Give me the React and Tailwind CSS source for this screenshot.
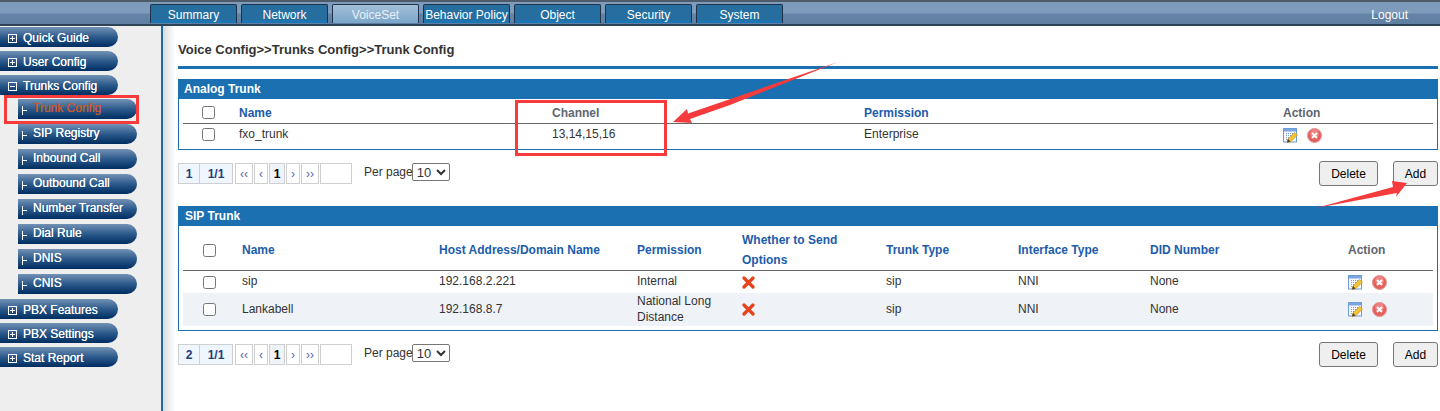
const font = { fontFamily: '"Liberation Sans", Arial, sans-serif' };

const tabs = [
  ['Summary', false],
  ['Network', false],
  ['VoiceSet', true],
  ['Behavior Policy', false],
  ['Object', false],
  ['Security', false],
  ['System', false],
];

function Box({ minus }) {
  return (
    <span className="w-[9px] h-[9px] border border-white flex items-center justify-center relative shrink-0">
      <span className="absolute w-[5px] h-px bg-white" />
      {!minus && <span className="absolute w-px h-[5px] bg-white" />}
    </span>
  );
}

const navText = '[text-shadow:0_0_0.6px_currentColor]';

function TopItem({ label, minus }) {
  return (
    <div className="h-5 w-[118px] mb-1 rounded-r-[10px] bg-linear-to-b from-[#7392b5] via-[#2c5a8c] to-[#002d60] flex items-center pl-2 gap-[6px] text-white text-[12px]">
      <span className="mt-[2px]"><Box minus={minus} /></span>
      <span className={`pt-[2px] ${navText}`}>{label}</span>
    </div>
  );
}

function SubItem({ label, active }) {
  return (
    <div className="h-5 w-[119px] ml-[18px] mb-[5px] rounded-r-[10px] bg-linear-to-b from-[#7392b5] via-[#2c5a8c] to-[#002d60] flex items-center pl-[3px] text-[12px]">
      <span className="relative w-[5px] h-[9px] border-l border-white mr-[6px] ml-[1px] mt-[2px]">
        <span className="absolute left-0 top-[4px] w-1 h-px bg-white" />
      </span>
      <span className={`pb-[3px] ${navText} ${active ? 'text-[#c8592e]' : 'text-white'}`}>{label}</span>
    </div>
  );
}

function EditIcon() {
  return (
    <svg width="15" height="15" viewBox="0 0 15 15" className="shrink-0">
      <rect x="0.5" y="0.5" width="13" height="13.5" fill="#f4f8fd" stroke="#6f9bd8" />
      <rect x="1" y="1" width="12" height="2.5" fill="#7ba5de" />
      <path d="M3 5.5h8M3 7.5h8M3 9.5h5M3 11.5h3" stroke="#7f9cc4" strokeWidth="1" strokeDasharray="1 1" />
      <path d="M4 14.5l1-3.5 6.5-6.5 3 2.5-6.5 6.5z" fill="#f2c335" stroke="#b98a1e" strokeWidth="0.6" />
      <path d="M4 14.5l1-3.5 2.5 2.5z" fill="#5a3a1a" />
    </svg>
  );
}

function DeleteIcon() {
  return (
    <svg width="15" height="15" viewBox="0 0 15 15" className="shrink-0">
      <circle cx="7.5" cy="7.5" r="7" fill="#e4605f" stroke="#e39593" />
      <circle cx="7.5" cy="5.5" r="4.5" fill="#f29a98" opacity="0.6" />
      <path d="M5 5l5 5M10 5l-5 5" stroke="#fff" strokeWidth="2" />
    </svg>
  );
}

function RedX() {
  return (
    <svg width="13" height="13" viewBox="0 0 13 13">
      <path d="M2 2l9 9M11 2l-9 9" stroke="#e5431c" strokeWidth="3.2" strokeLinecap="round" />
    </svg>
  );
}

function Pager({ count }) {
  const cell = 'h-[21px] border border-[#cfcfcf] flex items-center justify-center text-[12px]';
  return (
    <div className="flex items-start">
      <div className={`${cell} w-[22px] bg-[#f0f6fd] font-bold text-[#1b3f80]`}>{count}</div>
      <div className={`${cell} w-[34px] -ml-px bg-[#f0f6fd] font-bold text-[#1b3f80] mr-[2px]`}>1/1</div>
      <div className={`${cell} w-[18px] text-[#5a5fb0] mr-px`}>‹‹</div>
      <div className={`${cell} w-[14px] text-[#5a5fb0] mr-px`}>‹</div>
      <div className={`${cell} w-4 bg-[#f0f4fa] font-bold text-black mr-px`}>1</div>
      <div className={`${cell} w-[14px] text-[#5a5fb0] mr-px`}>›</div>
      <div className={`${cell} w-[18px] text-[#5a5fb0] mr-px`}>››</div>
      <div className="h-[21px] w-[32px] border border-[#cfcfcf] bg-white" />
      <span className="ml-3 text-[12px] leading-[18px] text-[#333]">Per page</span>
      <select className="-ml-px w-[38px] h-[18px] text-[13px] text-[#333] border border-[#767676] rounded-[2px] bg-white" style={font} defaultValue="10">
        <option>10</option>
      </select>
    </div>
  );
}

function PageActions({ count }) {
  const btn = 'h-[25px] border border-[#767676] rounded-[3px] bg-[#efefef] text-[12px] text-black';
  return (
    <div className="flex items-start justify-between">
      <div className="pt-[2px]"><Pager count={count} /></div>
      <div className="flex gap-[15px]">
        <button className={`${btn} w-[59px]`}>Delete</button>
        <button className={`${btn} w-[45px]`}>Add</button>
      </div>
    </div>
  );
}

const th = 'font-bold text-[12px] text-[#1b5cab]';
const thGray = 'font-bold text-[12px] text-[#5d6670]';

const sipCols = 'grid grid-cols-[59px_197px_198px_105px_144px_132px_132px_198px_1fr] items-center';
const analogCols = 'grid grid-cols-[56px_313px_312px_419px_1fr] items-center';

function SipRow({ name, host, perm, stripe, tall }) {
  return (
    <div className={`${sipCols} mx-1 text-[12px] text-[#333] ${tall ? 'h-[33px]' : 'h-[22px]'} ${stripe ? 'bg-[#eff2f7]' : ''}`}>
      <div className="pl-5 flex"><input type="checkbox" className="w-[13px] h-[13px] m-0" /></div>
      <div className="-translate-y-px">{name}</div>
      <div className="-translate-y-px">{host}</div>
      <div className="leading-4 pr-2 -translate-y-px">{perm}</div>
      <div className="flex"><RedX /></div>
      <div className="-translate-y-px">sip</div>
      <div className="-translate-y-px">NNI</div>
      <div className="-translate-y-px">None</div>
      <div className="flex gap-[9px]"><EditIcon /><DeleteIcon /></div>
    </div>
  );
}

export default function App() {
  return (
    <div className="relative w-[1440px] h-[411px] overflow-hidden bg-white flex flex-col" style={font}>
      <header className="h-[26px] shrink-0 border-t-2 border-b-2 border-t-[#4d5a68] border-b-[#2f4358] bg-[linear-gradient(to_bottom,#7f9bbb_0,#7f9bbb_11px,#6684a8_12px,#5e7ea2_100%)] flex items-start pl-[150px]">
        <nav className="flex gap-1 pt-[2px]">
          {tabs.map(([label, active]) => (
            <div
              key={label}
              className={`w-[87px] h-[19px] pt-[1px] border border-b-0 border-[#1e3347] rounded-t-[2px] flex items-center justify-center text-[12px] whitespace-nowrap ${
                active
                  ? 'bg-linear-to-b from-[#a3bfd8] to-[#7aa5c9] text-[#e8f0f7]'
                  : 'bg-[linear-gradient(to_bottom,#256e9f_0,#256e9f_15px,#1a76b6_16px)] text-white'
              }`}
            >
              {label}
            </div>
          ))}
        </nav>
        <div className="ml-auto mr-[32px] pt-[4px] text-[12px] text-white">Logout</div>
      </header>

      <div className="flex flex-1 min-h-0">
        <aside className="w-[163px] shrink-0 bg-[#eeeeee] border-r-2 border-[#1c6aa8] pt-[1px]">
          <TopItem label="Quick Guide" />
          <TopItem label="User Config" />
          <TopItem label="Trunks Config" minus />
          <SubItem label="Trunk Config" active />
          <SubItem label="SIP Registry" />
          <SubItem label="Inbound Call" />
          <SubItem label="Outbound Call" />
          <SubItem label="Number Transfer" />
          <SubItem label="Dial Rule" />
          <SubItem label="DNIS" />
          <SubItem label="CNIS" />
          <TopItem label="PBX Features" />
          <TopItem label="PBX Settings" />
          <TopItem label="Stat Report" />
        </aside>

        <main className="flex-1 pl-[15px] pr-[2px] bg-[linear-gradient(to_right,#dcdcdc_0,#ffffff_12px)]">
          <h1 className="h-[43px] pt-4 text-[13px] leading-4 font-bold text-[#333] border-b-[3px] border-[#1a70b0]">
            Voice Config&gt;&gt;Trunks Config&gt;&gt;Trunk Config
          </h1>

          <section className="mt-[10px] border border-[#1a70b0] h-[71px]">
            <div className="h-5 -mt-px bg-[#1a70b0] text-white font-bold text-[12px] leading-5 pl-[5px]">Analog Trunk</div>
            <div className={`${analogCols} h-[25px] pt-[3px] mx-1 border-b border-[#666]`}>
              <div className="pl-[19px] flex"><input type="checkbox" className="w-[13px] h-[13px] m-0" /></div>
              <div className={th}>Name</div>
              <div className={thGray}>Channel</div>
              <div className={th}>Permission</div>
              <div className={thGray}>Action</div>
            </div>
            <div className={`${analogCols} h-5 mx-1 text-[12px] text-[#333]`}>
              <div className="pl-[19px] flex"><input type="checkbox" className="w-[13px] h-[13px] m-0" /></div>
              <div>fxo_trunk</div>
              <div>13,14,15,16</div>
              <div>Enterprise</div>
              <div className="flex gap-[9px] mt-[2px]"><EditIcon /><DeleteIcon /></div>
            </div>
          </section>

          <div className="mt-[11px]"><PageActions count="1" /></div>

          <section className="mt-5 border border-[#1a70b0] h-[125px]">
            <div className="h-5 -mt-px bg-[#1a70b0] text-white font-bold text-[12px] leading-5 pl-[6px]">SIP Trunk</div>
            <div className={`${sipCols} h-[45px] pt-1 mx-1 border-b border-[#666]`}>
              <div className="pl-5 flex"><input type="checkbox" className="w-[13px] h-[13px] m-0" /></div>
              <div className={th}>Name</div>
              <div className={th}>Host Address/Domain Name</div>
              <div className={th}>Permission</div>
              <div className={`${th} leading-5 pr-4`}>Whether to Send Options</div>
              <div className={th}>Trunk Type</div>
              <div className={th}>Interface Type</div>
              <div className={th}>DID Number</div>
              <div className={thGray}>Action</div>
            </div>
            <SipRow name="sip" host="192.168.2.221" perm="Internal" />
            <SipRow name="Lankabell" host="192.168.8.7" perm="National Long Distance" stripe tall />
          </section>

          <div className="mt-[11px]"><PageActions count="2" /></div>
        </main>
      </div>

      <div className="absolute left-[4px] top-[95px] w-[135px] h-[29px] border-[3px] border-[#f53b3b]" />
      <div className="absolute left-[515px] top-[100px] w-[152px] h-[56px] border-[3px] border-[#f53b3b]" />
      <svg className="absolute left-0 top-0 pointer-events-none" width="1440" height="411">
        <polygon points="673,122 687,109 688,113.5 838,62 730,105 690,119 692,123" fill="#f53b3b" />
        <polygon points="1407,183 1392,181 1393,187 1316,208 1397,193 1396,197" fill="#f53b3b" />
      </svg>
    </div>
  );
}
